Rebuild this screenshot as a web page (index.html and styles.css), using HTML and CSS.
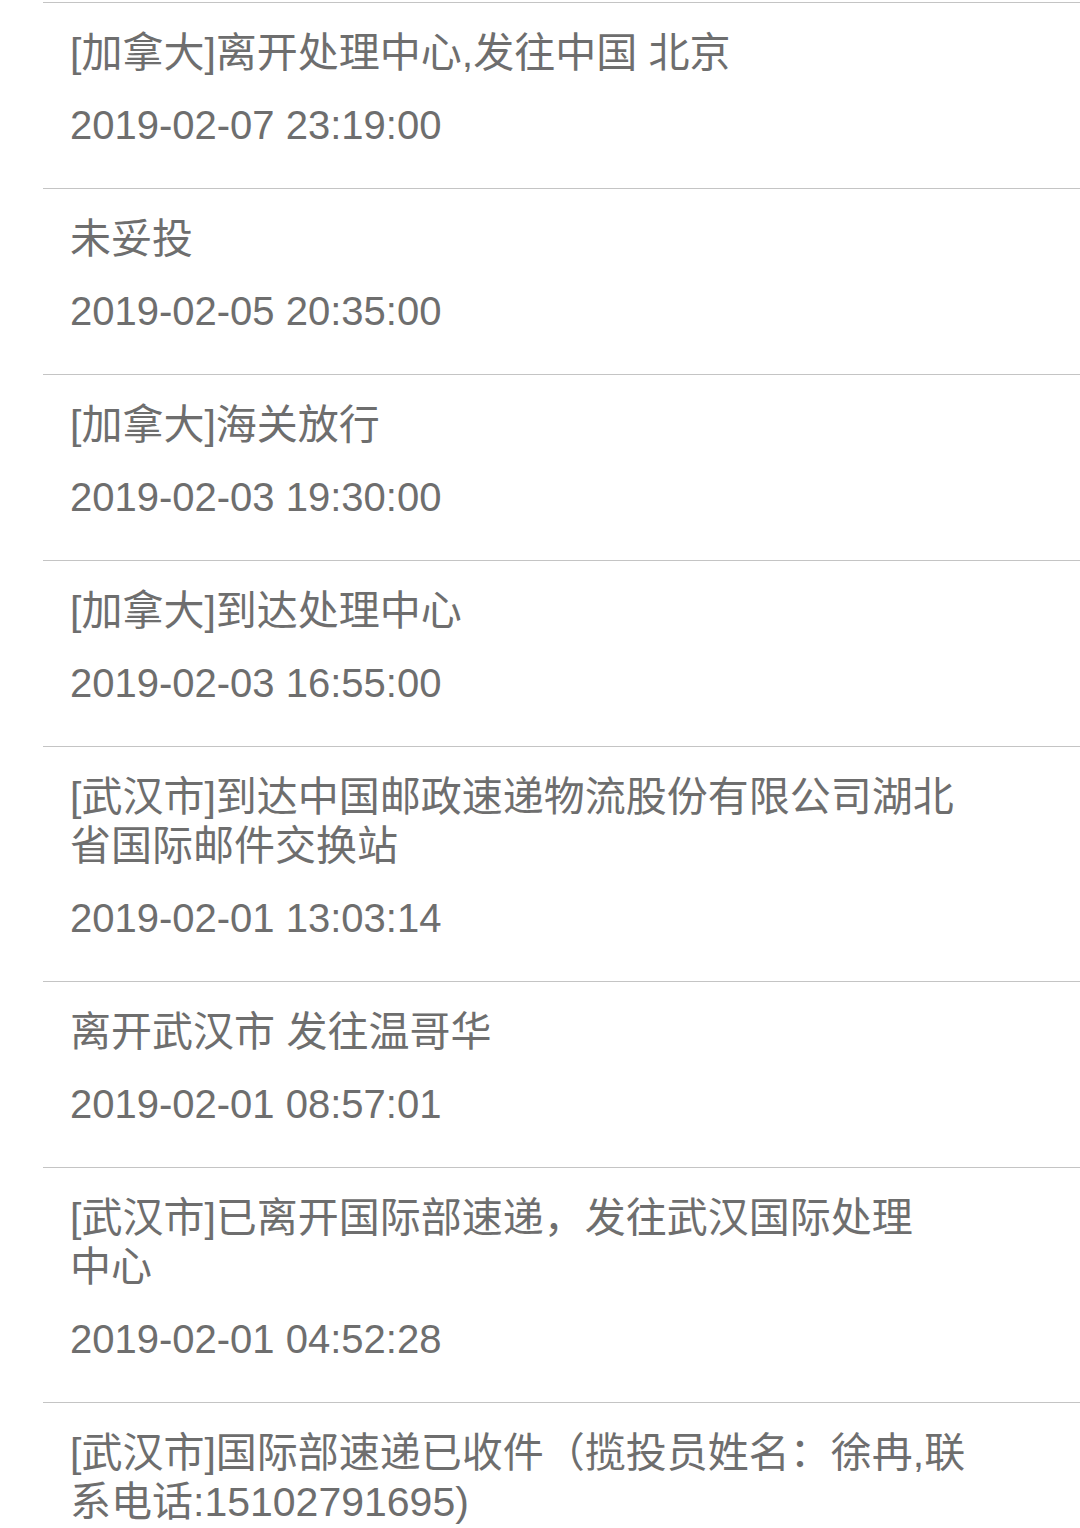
FILE: index.html
```html
<!DOCTYPE html>
<html lang="zh-CN">
<head>
  <meta charset="UTF-8">
  <meta name="viewport" content="width=device-width, initial-scale=1.0">
  <title>物流详情</title>
  <link rel="stylesheet" href="styles.css">
</head>
<body>
  <ul class="track-list">
    <li class="track-item">
      <p class="track-desc">[加拿大]离开处理中心,发往中国 北京</p>
      <p class="track-time">2019-02-07 23:19:00</p>
    </li>
    <li class="track-item">
      <p class="track-desc">未妥投</p>
      <p class="track-time">2019-02-05 20:35:00</p>
    </li>
    <li class="track-item">
      <p class="track-desc">[加拿大]海关放行</p>
      <p class="track-time">2019-02-03 19:30:00</p>
    </li>
    <li class="track-item">
      <p class="track-desc">[加拿大]到达处理中心</p>
      <p class="track-time">2019-02-03 16:55:00</p>
    </li>
    <li class="track-item">
      <p class="track-desc">[武汉市]到达中国邮政速递物流股份有限公司湖北省国际邮件交换站</p>
      <p class="track-time">2019-02-01 13:03:14</p>
    </li>
    <li class="track-item">
      <p class="track-desc">离开武汉市 发往温哥华</p>
      <p class="track-time">2019-02-01 08:57:01</p>
    </li>
    <li class="track-item">
      <p class="track-desc">[武汉市]已离开国际部速递，发往武汉国际处理<br>中心</p>
      <p class="track-time">2019-02-01 04:52:28</p>
    </li>
    <li class="track-item">
      <p class="track-desc">[武汉市]国际部速递已收件（揽投员姓名：徐冉,联系电话:15102791695)</p>
    </li>
  </ul>
</body>
</html>
```

FILE: styles.css
```css
body {
  margin: 0;
  padding: 0;
  background-color: #fff;
  color: #6e6e6e;
  font-family: 'Liberation Sans', 'Noto Sans CJK SC', sans-serif;
  overflow: hidden;
}

.track-list {
  list-style: none;
  margin: 2px 0 0 43px;
  padding: 0;
  border-top: 1px solid #c4c4c4;
}

.track-item {
  padding: 26px 100px 38px 27px;
  border-bottom: 1px solid #c4c4c4;
}

.track-item p {
  margin: 0;
}

.track-desc {
  font-size: 41px;
  line-height: 49px;
}

.track-time {
  margin-top: 22px !important;
  font-size: 40px;
  line-height: 50px;
}
```
